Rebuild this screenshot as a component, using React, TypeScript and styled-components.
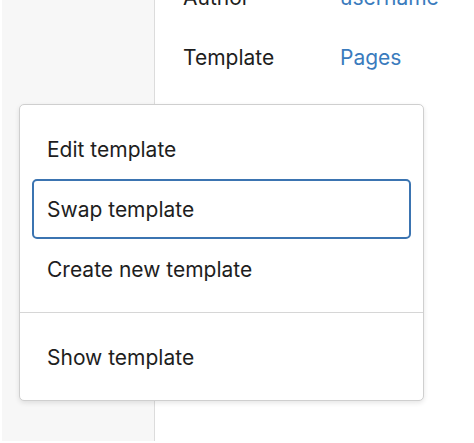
import React from 'react';
import styled, { createGlobalStyle } from 'styled-components';

const GlobalStyle = createGlobalStyle`
  html, body {
    margin: 0;
    padding: 0;
    background: #ffffff;
  }
  body {
    font-family: Inter, "Noto Sans", "Liberation Sans", sans-serif;
    color: #1e1e1e;
    -webkit-font-smoothing: antialiased;
  }
`;

const Page = styled.div`
  position: relative;
  width: 474px;
  height: 443px;
  overflow: hidden;
  padding: 0 0 2px 2px;
  box-sizing: border-box;
`;

const Layout = styled.div`
  display: flex;
  height: 100%;
`;

const Sidebar = styled.aside`
  width: 152px;
  flex-shrink: 0;
  background: #f7f7f7;
  border-right: 1.5px solid #dcdcdc;
`;

const Main = styled.main`
  flex: 1;
  padding-left: 28px;
`;

const Details = styled.dl`
  margin: -33px 0 0;
  display: grid;
  grid-template-columns: 157px 1fr;
  grid-auto-rows: 60px;
  align-items: center;
  font-size: 21px;
`;

const Label = styled.dt`
  margin: 0;
  color: #1e1e1e;
`;

const Value = styled.dd`
  margin: 0;
  color: #3a7bbd;
`;

const Menu = styled.div`
  position: absolute;
  top: 104px;
  left: 19px;
  width: 405px;
  box-sizing: border-box;
  background: #ffffff;
  border: 1px solid #cfcfcf;
  border-radius: 5px;
  box-shadow: 0 2px 5px rgba(0, 0, 0, 0.1);
`;

const Group = styled.div`
  padding: 14px 12px 13px;

  & + & {
    border-top: 1px solid #d6d6d6;
  }
`;

const Item = styled.button<{ $focused?: boolean }>`
  display: flex;
  align-items: center;
  width: 100%;
  height: 60px;
  box-sizing: border-box;
  padding: 0 13px;
  margin: 0;
  background: none;
  font: inherit;
  font-size: 21px;
  color: #1e1e1e;
  text-align: left;
  cursor: pointer;
  border: 2px solid ${({ $focused }) => ($focused ? '#3b74b1' : 'transparent')};
  border-radius: 5px;
  outline: none;
`;

export default function App() {
  return (
    <>
      <GlobalStyle />
      <Page>
        <Layout>
          <Sidebar />
          <Main>
            <Details>
              <Label>Author</Label>
              <Value>username</Value>
              <Label>Template</Label>
              <Value>Pages</Value>
            </Details>
          </Main>
        </Layout>
        <Menu role="menu">
          <Group>
            <Item role="menuitem">Edit template</Item>
            <Item role="menuitem" $focused>Swap template</Item>
            <Item role="menuitem">Create new template</Item>
          </Group>
          <Group>
            <Item role="menuitem">Show template</Item>
          </Group>
        </Menu>
      </Page>
    </>
  );
}
